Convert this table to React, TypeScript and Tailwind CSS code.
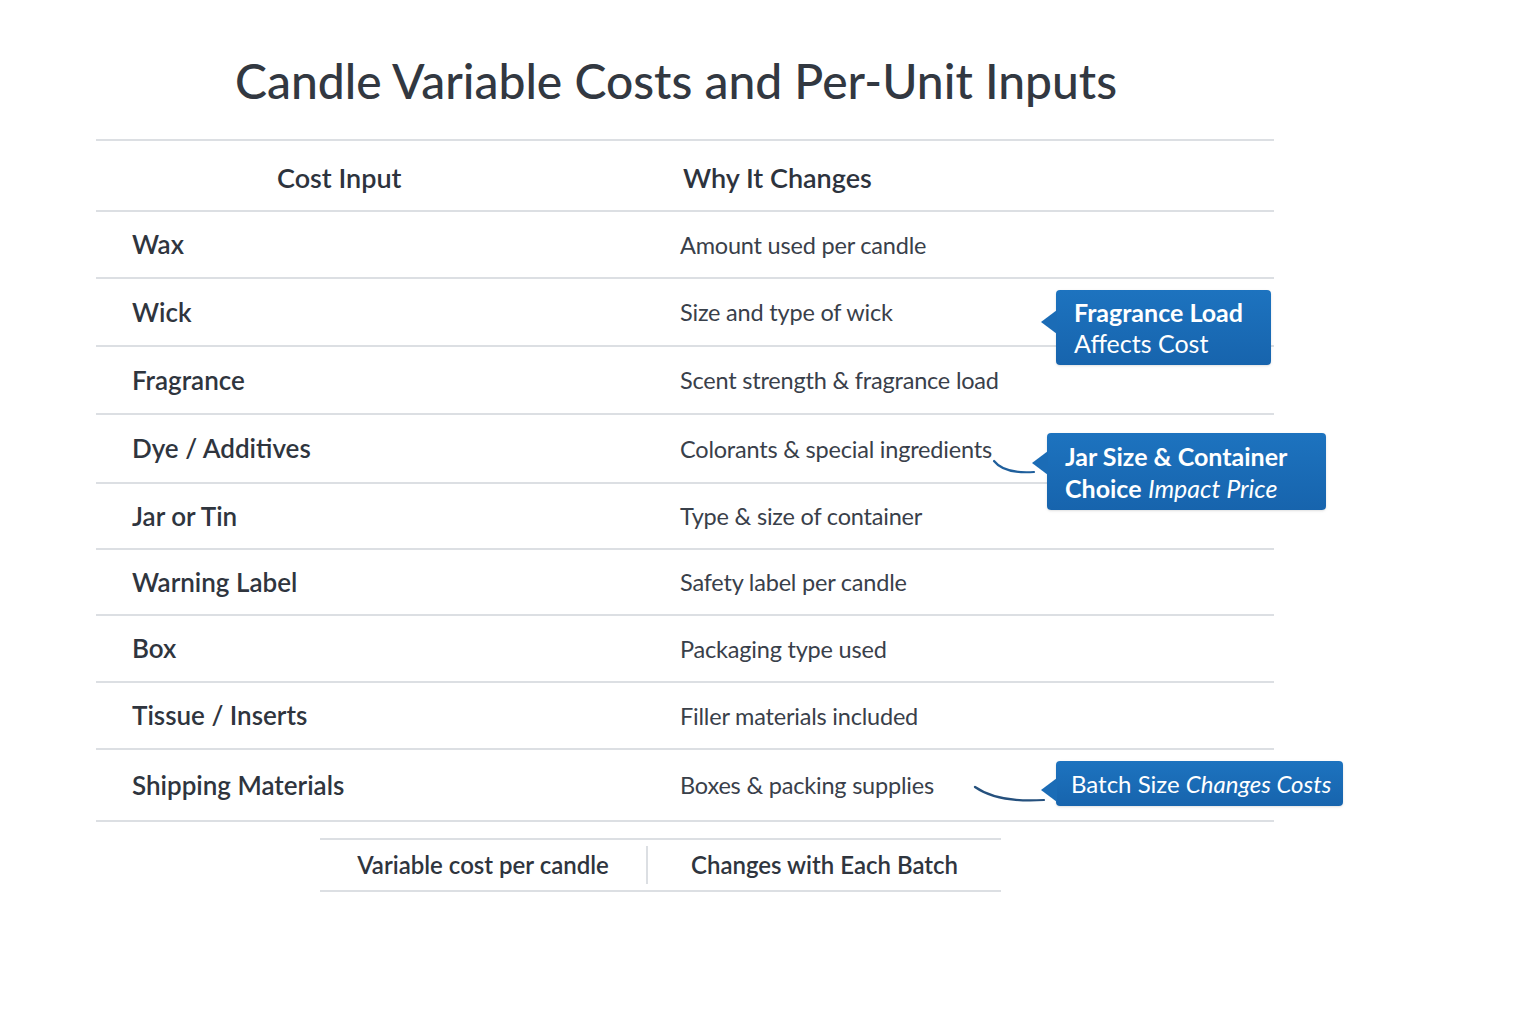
import React from 'react';

const rows = [
  { name: 'Wax', why: 'Amount used per candle', h: 'h-[67px]' },
  { name: 'Wick', why: 'Size and type of wick', h: 'h-[68px]' },
  { name: 'Fragrance', why: 'Scent strength & fragrance load', h: 'h-[68px]' },
  { name: 'Dye / Additives', why: 'Colorants & special ingredients', h: 'h-[69px]' },
  { name: 'Jar or Tin', why: 'Type & size of container', h: 'h-[66px]' },
  { name: 'Warning Label', why: 'Safety label per candle', h: 'h-[66px]' },
  { name: 'Box', why: 'Packaging type used', h: 'h-[67px]' },
  { name: 'Tissue / Inserts', why: 'Filler materials included', h: 'h-[67px]' },
  { name: 'Shipping Materials', why: 'Boxes & packing supplies', h: 'h-[72px]' },
];

const Pointer = ({ top }: { top: string }) => (
  <div className={`absolute -left-[15px] ${top} h-0 w-0 border-y-[12px] border-r-[16px] border-y-transparent border-r-[#1b6cb6]`} />
);

const App = () => {
  return (
    <div
      className="relative h-[1024px] w-[1536px] overflow-hidden bg-white text-[#2d333d]"
      style={{ fontFamily: 'Lato, "Noto Sans", sans-serif' }}
    >
      <div className="ml-[96px] w-[1178px] pt-[52px]">
        <h1 className="ml-[139px] h-[87px] text-[48px] font-medium leading-[58px] text-[#323841]">
          Candle Variable Costs and Per-Unit Inputs
        </h1>

        {/* table */}
        <div className="border-t-2 border-[#dcdfe3]">
          <div className="flex h-[71px] items-center border-b-2 border-[#dcdfe3] pt-[6px] text-[27px] font-semibold">
            <div className="w-[584px] pl-[181px]">Cost Input</div>
            <div className="pl-[3px]">Why It Changes</div>
          </div>
          {rows.map((r) => (
            <div key={r.name} className={`flex ${r.h} items-center border-b-2 border-[#dcdfe3]`}>
              <div className="w-[584px] pl-[36px] text-[26px] font-semibold text-[#2f353e]">{r.name}</div>
              <div className="pt-[2px] text-[23.5px] tracking-[-0.2px] text-[#39404a]">{r.why}</div>
            </div>
          ))}
        </div>

        {/* summary */}
        <div className="ml-[224px] mt-[16px] flex h-[54px] w-[681px] items-center border-y-2 border-[#dcdfe3] text-[24px] font-semibold text-[#2f353e]">
          <div className="flex h-[38px] w-[328px] items-center justify-center border-r-2 border-[#dcdfe3]">
            Variable cost per candle
          </div>
          <div className="flex flex-1 items-center justify-center">Changes with Each Batch</div>
        </div>
      </div>

      {/* callouts */}
      <div className="absolute left-[1056px] top-[290px] flex h-[75px] w-[215px] flex-col justify-center rounded-[4px] bg-gradient-to-b from-[#1d73bf] to-[#1764ad] pl-[18px] text-[25px] leading-[31px] text-white shadow-sm">
        <Pointer top="top-[20px]" />
        <div className="font-bold">Fragrance Load</div>
        <div>Affects Cost</div>
      </div>

      <div className="absolute left-[1047px] top-[433px] flex h-[77px] w-[279px] flex-col justify-center rounded-[4px] bg-gradient-to-b from-[#1d73bf] to-[#1764ad] pl-[18px] text-[25px] leading-[32px] text-white shadow-sm">
        <Pointer top="top-[18px]" />
        <div className="font-bold">Jar Size &amp; Container</div>
        <div>
          <span className="font-bold">Choice</span> <span className="italic">Impact Price</span>
        </div>
      </div>

      <div className="absolute left-[1056px] top-[761px] flex h-[45px] w-[287px] items-center rounded-[4px] bg-gradient-to-b from-[#1d73bf] to-[#1764ad] pl-[15px] text-[24px] text-white shadow-sm">
        <Pointer top="top-[17px]" />
        <span>Batch Size</span>&nbsp;<span className="italic">Changes Costs</span>
      </div>

      {/* connectors */}
      <svg className="absolute left-0 top-0" width="1536" height="1024">
        <path d="M994 461 Q1004 474 1034 472" fill="none" stroke="#1f5f9c" strokeWidth="2.2" strokeLinecap="round" />
        <path d="M975 787 Q998 803 1044 800" fill="none" stroke="#25507d" strokeWidth="2.2" strokeLinecap="round" />
      </svg>
    </div>
  );
};

export default App;
